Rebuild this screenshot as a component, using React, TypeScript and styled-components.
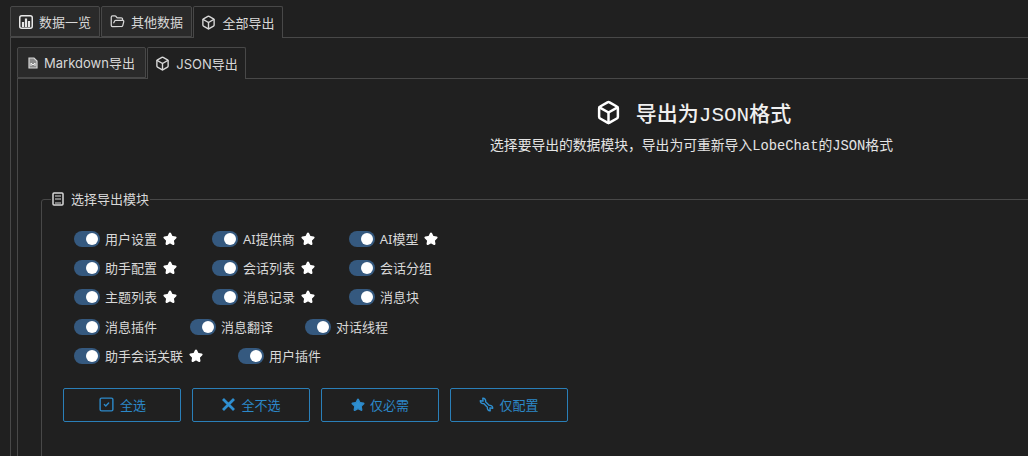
import { ReactNode } from "react";
import styled, { createGlobalStyle } from "styled-components";
import { Box, FolderOpen, SquareCheck, Star } from "lucide-react";

const GlobalStyle = createGlobalStyle`
  html, body {
    margin: 0;
    height: 100%;
    overflow: hidden;
    background: #202020;
  }
  body {
    font-family: "Noto Sans", "Noto Sans CJK SC", sans-serif;
    color: #e0e0e0;
  }
`;

const Page = styled.div`
  width: 1028px;
  height: 456px;
  overflow: hidden;
  padding: 6px 0 0 10px;
  box-sizing: border-box;
`;

const TabBar = styled.div`
  display: flex;
  height: 32px;
  border-bottom: 1px solid #484848;
  box-sizing: border-box;
`;

const Tab = styled.div<{ $active?: boolean; $width: number }>`
  width: ${(p) => p.$width}px;
  height: ${(p) => (p.$active ? 32 : 31)}px;
  display: flex;
  align-items: center;
  justify-content: center;
  gap: 6px;
  box-sizing: border-box;
  margin-right: 1px;
  border: 1px solid #484848;
  border-bottom: ${(p) => (p.$active ? "none" : "1px solid #484848")};
  border-radius: 2px 2px 0 0;
  background: ${(p) => (p.$active ? "#202020" : "#2a2a2a")};
  font-family: Inter, "Noto Sans CJK SC", sans-serif;
  font-size: 13px;
  color: #d8d8d8;
`;

const OuterPane = styled.div`
  border-left: 1px solid #484848;
  padding: 9px 0 0 6px;
  width: 1400px;
  height: 420px;
`;

const InnerPane = styled.div`
  border-left: 1px solid #484848;
  width: 1352px;
  height: 380px;
  padding-top: 18px;
  box-sizing: border-box;
`;

const Heading = styled.div`
  display: flex;
  align-items: center;
  justify-content: center;
  gap: 15px;
  height: 30px;
  font-size: 21px;
  font-weight: 500;
  color: #f0f0f0;
  font-family: "Liberation Mono", "Noto Sans CJK SC", monospace;
`;

const Subtitle = styled.div`
  margin-top: 10px;
  padding-right: 4px;
  text-align: center;
  font-size: 13.8px;
  line-height: 20px;
  color: #e4e4e4;
  font-family: "Liberation Mono", "Noto Sans CJK SC", monospace;
`;

const Group = styled.div`
  margin: 42px 0 0 23px;
  border: 1px solid #484848;
  border-radius: 3px 0 0 0;
  height: 300px;
  padding: 24px 0 0 32px;
  box-sizing: border-box;
  position: relative;
`;

const GroupTitle = styled.div`
  position: absolute;
  top: -10px;
  left: 9px;
  display: flex;
  align-items: center;
  gap: 7px;
  padding: 0 1px;
  background: #202020;
  font-size: 13px;
  line-height: 18px;
  color: #d8d8d8;
`;

const ToggleRow = styled.div`
  display: flex;
  align-items: center;
  height: 29.4px;
`;

const ToggleItem = styled.div<{ $mr: number }>`
  display: flex;
  align-items: center;
  margin-right: ${(p) => p.$mr}px;
`;

const Switch = styled.span`
  width: 26px;
  height: 16px;
  border-radius: 8px;
  background: #35597f;
  display: flex;
  align-items: center;
  justify-content: flex-end;
  padding-right: 2px;
  box-sizing: border-box;
  margin-right: 5px;

  &::after {
    content: "";
    width: 12px;
    height: 12px;
    border-radius: 50%;
    background: #ffffff;
  }
`;

const Label = styled.span`
  font-size: 13px;
  line-height: 18px;
  color: #d8d8d8;
  white-space: nowrap;
`;

const RequiredStar = styled(Star)`
  margin-left: 6px;
  color: #ffffff;
  fill: #ffffff;
`;

const Buttons = styled.div`
  display: flex;
  gap: 11px;
  margin: 17px 0 0 -11px;
`;

const Action = styled.button`
  width: 118px;
  height: 34px;
  display: flex;
  align-items: center;
  justify-content: center;
  gap: 5px;
  background: transparent;
  border: 1px solid #2a7fb8;
  border-radius: 2px;
  color: #2c88c8;
  font-family: inherit;
  font-size: 13px;
  padding: 0;
`;

const CrossIcon = () => (
  <svg width="15" height="15" viewBox="0 0 15 15">
    <path d="M2 2 L13 13 M13 2 L2 13" stroke="#2f8fd0" strokeWidth="2.8" fill="none" />
  </svg>
);

const WrenchIcon = () => (
  <svg width="15" height="15" viewBox="-1 -1 17 17">
    <g transform="rotate(45 7.5 7.5)">
      <path
        d="M4.5 6H10.5A3 3 0 0 1 15.5 5.5L13 7.5L15.5 9.5A3 3 0 0 1 10.5 9H4.5A3 3 0 0 1 -0.5 9.5L2 7.5L-0.5 5.5A3 3 0 0 1 4.5 6Z"
        fill="none"
        stroke="#2f8fd0"
        strokeWidth="1.5"
        strokeLinejoin="round"
      />
    </g>
  </svg>
);

const ChartIcon = () => (
  <svg width="14" height="14" viewBox="0 0 14 14">
    <rect x="0.75" y="0.75" width="12.5" height="12.5" rx="2" fill="none" stroke="#e8e8e8" strokeWidth="1.5" />
    <path d="M4 7v5M7 3.5v8.5M10 6v6" stroke="#e8e8e8" strokeWidth="2.2" />
  </svg>
);

const MarkdownIcon = () => (
  <svg width="10" height="12" viewBox="0 0 10 12">
    <path d="M1 1h5l3 3v7H1z" fill="#8a8a8a" stroke="#d8d8d8" strokeWidth="1.2" />
    <path d="M3 9V6l2 2 2-2v3" fill="none" stroke="#f0f0f0" strokeWidth="1" />
  </svg>
);

const ClipboardIcon = () => (
  <svg width="12" height="14" viewBox="0 0 12 14">
    <rect x="1" y="1" width="10" height="12" rx="1" fill="none" stroke="#d8d8d8" strokeWidth="1.5" />
    <path d="M3 4h6M3 7h6M3 11h6" stroke="#d8d8d8" strokeWidth="1" />
  </svg>
);

type Module = { label: string; required?: boolean; gap: number };

const rows: Module[][] = [
  [
    { label: "用户设置", required: true, gap: 35 },
    { label: "AI提供商", required: true, gap: 34 },
    { label: "AI模型", required: true, gap: 0 },
  ],
  [
    { label: "助手配置", required: true, gap: 35 },
    { label: "会话列表", required: true, gap: 34 },
    { label: "会话分组", gap: 0 },
  ],
  [
    { label: "主题列表", required: true, gap: 35 },
    { label: "消息记录", required: true, gap: 34 },
    { label: "消息块", gap: 0 },
  ],
  [
    { label: "消息插件", gap: 33 },
    { label: "消息翻译", gap: 32 },
    { label: "对话线程", gap: 0 },
  ],
  [
    { label: "助手会话关联", required: true, gap: 35 },
    { label: "用户插件", gap: 0 },
  ],
];

const actions: { label: string; icon: ReactNode }[] = [
  { label: "全选", icon: <SquareCheck size={17} /> },
  { label: "全不选", icon: <CrossIcon /> },
  { label: "仅必需", icon: <Star size={14} fill="#2f8fd0" strokeWidth={2.4} /> },
  { label: "仅配置", icon: <WrenchIcon /> },
];

export default function App() {
  return (
    <Page>
      <GlobalStyle />
      <TabBar>
        <Tab $width={90}>
          <ChartIcon />
          数据一览
        </Tab>
        <Tab $width={91}>
          <FolderOpen size={15} />
          其他数据
        </Tab>
        <Tab $width={90} $active>
          <Box size={15} strokeWidth={2.2} />
          全部导出
        </Tab>
      </TabBar>
      <OuterPane>
        <TabBar>
          <Tab $width={129}>
            <MarkdownIcon />
            Markdown导出
          </Tab>
          <Tab $width={99} $active>
            <Box size={15} strokeWidth={2.2} />
            JSON导出
          </Tab>
        </TabBar>
        <InnerPane>
          <Heading>
            <Box size={25} strokeWidth={2.4} color="#ffffff" />
            导出为JSON格式
          </Heading>
          <Subtitle>选择要导出的数据模块，导出为可重新导入LobeChat的JSON格式</Subtitle>
          <Group>
            <GroupTitle>
              <ClipboardIcon />
              选择导出模块
            </GroupTitle>
            {rows.map((row, i) => (
              <ToggleRow key={i}>
                {row.map((m) => (
                  <ToggleItem key={m.label} $mr={m.gap}>
                    <Switch />
                    <Label>{m.label}</Label>
                    {m.required && <RequiredStar size={14} strokeWidth={2.6} />}
                  </ToggleItem>
                ))}
              </ToggleRow>
            ))}
            <Buttons>
              {actions.map((a) => (
                <Action key={a.label}>
                  {a.icon}
                  {a.label}
                </Action>
              ))}
            </Buttons>
          </Group>
        </InnerPane>
      </OuterPane>
    </Page>
  );
}
